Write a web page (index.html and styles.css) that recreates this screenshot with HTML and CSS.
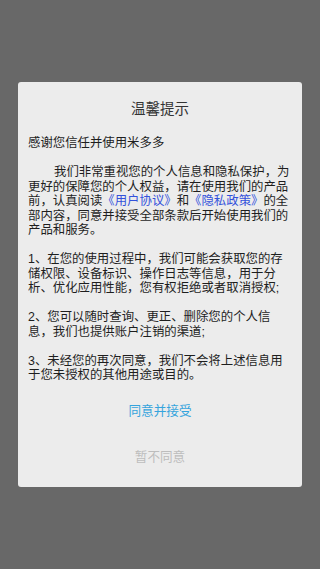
FILE: index.html
```html
<!DOCTYPE html>
<html lang="zh-CN">
<head>
<meta charset="utf-8">
<meta name="viewport" content="width=device-width, initial-scale=1">
<title>温馨提示</title>
<link rel="stylesheet" href="styles.css">
</head>
<body>
<div class="screen">
  <div class="dialog">
    <div class="title">温馨提示</div>
    <div class="content">
      <p>感谢您信任并使用米多多</p>
      <p><span class="indent"></span>我们非常重视您的个人信息和隐私保护，为<br>更好的保障您的个人权益，请在使用我们的产品<br>前，认真阅读<span class="link">《用户协议》</span>和<span class="link">《隐私政策》</span>的全<br>部内容，同意并接受全部条款后开始使用我们的<br>产品和服务。</p>
      <p>1、在您的使用过程中，我们可能会获取您的存<br>储权限、设备标识、操作日志等信息，用于分<br>析、优化应用性能，您有权拒绝或者取消授权;</p>
      <p>2、您可以随时查询、更正、删除您的个人信<br>息，我们也提供账户注销的渠道;</p>
      <p>3、未经您的再次同意，我们不会将上述信息用<br>于您未授权的其他用途或目的。</p>
    </div>
    <div class="actions">
      <div class="btn btn-accept">同意并接受</div>
      <div class="btn btn-reject">暂不同意</div>
    </div>
  </div>
</div>
</body>
</html>
```
FILE: styles.css
```css
html, body {
  margin: 0;
  padding: 0;
}
body {
  background: #686868;
  font-family: "Liberation Sans", "Noto Sans CJK SC", sans-serif;
}
.screen {
  width: 320px;
  height: 569px;
  padding-top: 82px;
  box-sizing: border-box;
}
.dialog {
  margin-left: 18px;
  width: 284px;
  height: 405px;
  background: #ececec;
  border-radius: 3px;
  box-sizing: border-box;
  padding-top: 17px;
  display: flex;
  flex-direction: column;
}
.title {
  text-align: center;
  font-size: 14.5px;
  line-height: 20px;
  color: #333;
}
.content {
  margin-top: 17px;
  padding: 0 8px 0 10px;
  font-size: 12.4px;
  line-height: 14.5px;
  color: #1e1e1e;
  white-space: nowrap;
}
.content p {
  margin: 0 0 14.5px 0;
}
.content p:last-child {
  margin-bottom: 0;
}
.indent {
  display: inline-block;
  width: 26px;
}
.link {
  color: #3352db;
}
.actions {
  margin-top: 4px;
  display: flex;
  flex-direction: column;
}
.btn {
  height: 46px;
  display: flex;
  align-items: center;
  justify-content: center;
  font-size: 12.6px;
}
.btn-accept {
  color: #35a4dd;
}
.btn-reject {
  color: #bdbdbd;
}
```
